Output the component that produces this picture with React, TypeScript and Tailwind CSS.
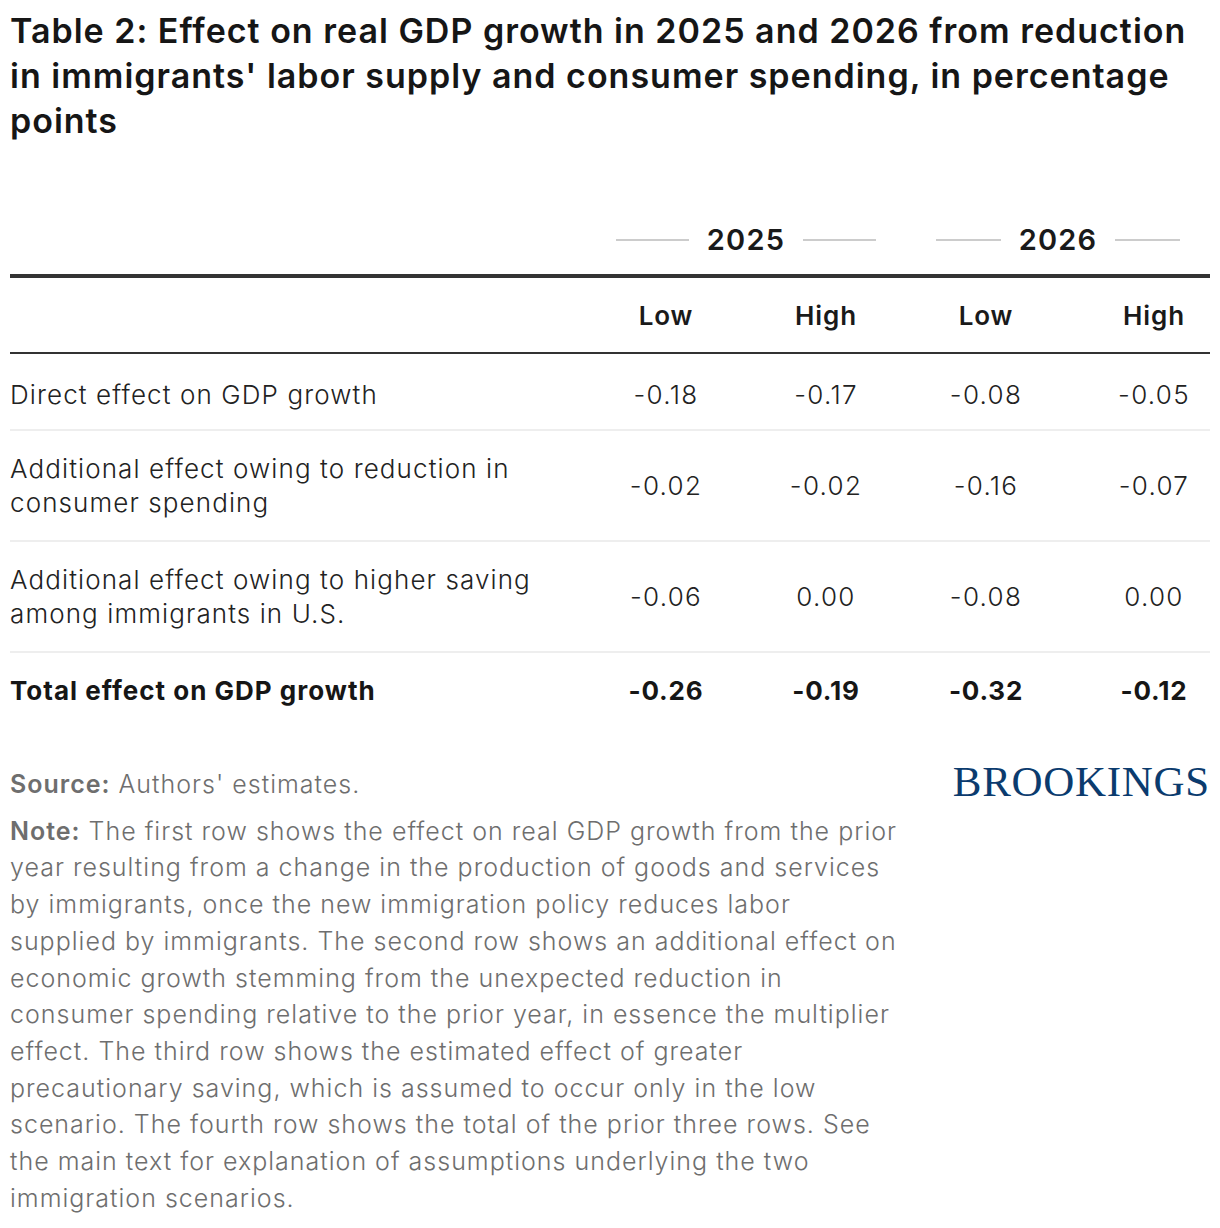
const rows = [
  { label: "Direct effect on GDP growth", values: ["-0.18", "-0.17", "-0.08", "-0.05"] },
  { label: "Additional effect owing to reduction in consumer spending", values: ["-0.02", "-0.02", "-0.16", "-0.07"] },
  { label: "Additional effect owing to higher saving among immigrants in U.S.", values: ["-0.06", "0.00", "-0.08", "0.00"] },
];

const total = { label: "Total effect on GDP growth", values: ["-0.26", "-0.19", "-0.32", "-0.12"] };

const cols = "grid grid-cols-[576px_160px_160px_160px_144px]";

function YearHeader({ year }: { year: string }) {
  return (
    <div className="flex items-center gap-[18px] px-[30px]">
      <div className="h-[2px] flex-1 bg-[#cccccc]" />
      <span className="text-[29px] font-semibold text-[#1a1a1a] leading-none tracking-[1.2px]">{year}</span>
      <div className="h-[2px] flex-1 bg-[#cccccc]" />
    </div>
  );
}

function Cells({ values, bold }: { values: string[]; bold?: boolean }) {
  return (
    <>
      {values.map((v, i) => (
        <div
          key={i}
          className={`flex items-center justify-center ${i === 3 ? "pl-[32px]" : ""} ${
            bold ? "font-bold tracking-[0.8px]" : "font-light tracking-[1.3px]"
          }`}>
          {v}
        </div>
      ))}
    </>
  );
}

export default function App() {
  return (
    <div
      className="min-h-screen bg-white px-[10px] text-[#222222]"
      style={{ fontFamily: "Inter, 'Noto Sans', sans-serif" }}>
      {/* タイトル */}
      <h1 className="pt-[8px] text-[34px] font-semibold leading-[45px] text-[#161616] tracking-[1px]">
        Table 2: Effect on real GDP growth in 2025 and 2026 from reduction in immigrants' labor supply and consumer
        spending, in percentage points
      </h1>

      {/* 年の見出し */}
      <div className="mt-[82px] grid grid-cols-[576px_320px_304px] pb-[20px]">
        <div />
        <YearHeader year="2025" />
        <YearHeader year="2026" />
      </div>

      <div className="h-[4px] bg-[#333333]" />

      {/* Low / High */}
      <div className={`${cols} h-[74px] text-[26px] font-semibold text-[#1a1a1a] tracking-[0.9px]`}>
        <div />
        {["Low", "High", "Low", "High"].map((h, i) => (
          <div key={i} className={`flex items-center justify-center ${i === 3 ? "pl-[32px]" : ""}`}>
            {h}
          </div>
        ))}
      </div>

      <div className="h-[2px] bg-[#333333]" />

      {rows.map((r, idx) => (
        <div
          key={r.label}
          className={`${cols} border-b-2 border-[#eeeeee] ${idx === 0 ? "pt-[24px] pb-[17px]" : "pt-[21px] pb-[20px]"} text-[26px] leading-[34px]`}>
          <div className="pr-[40px] font-light tracking-[1.1px]">{r.label}</div>
          <Cells values={r.values} />
        </div>
      ))}

      <div className={`${cols} pt-[21px] pb-[20px] text-[26px] leading-[34px] text-[#161616]`}>
        <div className="font-bold tracking-[1px]">{total.label}</div>
        <Cells values={total.values} bold />
      </div>

      {/* 出典・注記 */}
      <div className="mt-[38px] flex items-start justify-between">
        <div className="w-[892px] text-[25px] leading-[36.7px] text-[#6e6e6e] font-light tracking-[1px]">
          <p>
            <span className="font-semibold">Source:</span> Authors' estimates.
          </p>
          <p className="mt-[10px]">
            <span className="font-semibold">Note:</span> The first row shows the effect on real GDP growth from the
            prior year resulting from a change in the production of goods and services by immigrants, once the new
            immigration policy reduces labor supplied by immigrants. The second row shows an additional effect on
            economic growth stemming from the unexpected reduction in consumer spending relative to the prior year, in
            essence the multiplier effect. The third row shows the estimated effect of greater precautionary saving,
            which is assumed to occur only in the low scenario. The fourth row shows the total of the prior three rows.
            See the main text for explanation of assumptions underlying the two immigration scenarios.
          </p>
        </div>
        <div
          className="mt-[-6px] text-[43px] leading-none text-[#0b3b6e] tracking-[0.7px]"
          style={{ fontFamily: "'Liberation Serif', serif" }}>
          BROOKINGS
        </div>
      </div>
    </div>
  );
}
